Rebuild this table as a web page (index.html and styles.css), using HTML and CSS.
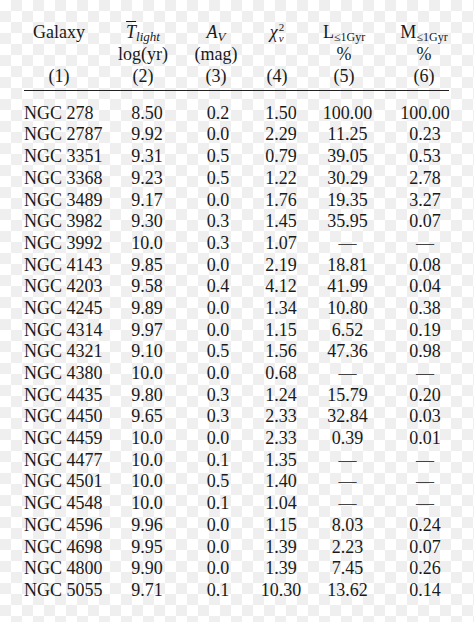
FILE: index.html
```html
<!DOCTYPE html>
<html>
<head>
<meta charset="utf-8">
<link rel="stylesheet" href="styles.css">
</head>
<body>
<div class="page">
  <div class="head">
    <div class="h">Galaxy</div>
    <div class="h"><span class="it ov">T</span><sub class="it">light</sub></div>
    <div class="h"><span class="it">A</span><sub class="it">V</sub></div>
    <div class="h"><span class="it">χ</span><span class="supsub"><span class="sp">2</span><span class="sb it">ν</span></span></div>
    <div class="h">L<sub class="gyr">≤1Gyr</sub></div>
    <div class="h">M<sub class="gyr">≤1Gyr</sub></div>

    <div class="h"></div>
    <div class="h">log(yr)</div>
    <div class="h">(mag)</div>
    <div class="h"></div>
    <div class="h">%</div>
    <div class="h">%</div>

    <div class="h">(1)</div>
    <div class="h">(2)</div>
    <div class="h">(3)</div>
    <div class="h">(4)</div>
    <div class="h">(5)</div>
    <div class="h">(6)</div>
  </div>
  <div class="rule"></div>
  <div class="body">
    <div class="n">NGC 278</div><div>8.50</div><div>0.2</div><div>1.50</div><div>100.00</div><div>100.00</div>
    <div class="n">NGC 2787</div><div>9.92</div><div>0.0</div><div>2.29</div><div>11.25</div><div>0.23</div>
    <div class="n">NGC 3351</div><div>9.31</div><div>0.5</div><div>0.79</div><div>39.05</div><div>0.53</div>
    <div class="n">NGC 3368</div><div>9.23</div><div>0.5</div><div>1.22</div><div>30.29</div><div>2.78</div>
    <div class="n">NGC 3489</div><div>9.17</div><div>0.0</div><div>1.76</div><div>19.35</div><div>3.27</div>
    <div class="n">NGC 3982</div><div>9.30</div><div>0.3</div><div>1.45</div><div>35.95</div><div>0.07</div>
    <div class="n">NGC 3992</div><div>10.0</div><div>0.3</div><div>1.07</div><div class="d">—</div><div class="d">—</div>
    <div class="n">NGC 4143</div><div>9.85</div><div>0.0</div><div>2.19</div><div>18.81</div><div>0.08</div>
    <div class="n">NGC 4203</div><div>9.58</div><div>0.4</div><div>4.12</div><div>41.99</div><div>0.04</div>
    <div class="n">NGC 4245</div><div>9.89</div><div>0.0</div><div>1.34</div><div>10.80</div><div>0.38</div>
    <div class="n">NGC 4314</div><div>9.97</div><div>0.0</div><div>1.15</div><div>6.52</div><div>0.19</div>
    <div class="n">NGC 4321</div><div>9.10</div><div>0.5</div><div>1.56</div><div>47.36</div><div>0.98</div>
    <div class="n">NGC 4380</div><div>10.0</div><div>0.0</div><div>0.68</div><div class="d">—</div><div class="d">—</div>
    <div class="n">NGC 4435</div><div>9.80</div><div>0.3</div><div>1.24</div><div>15.79</div><div>0.20</div>
    <div class="n">NGC 4450</div><div>9.65</div><div>0.3</div><div>2.33</div><div>32.84</div><div>0.03</div>
    <div class="n">NGC 4459</div><div>10.0</div><div>0.0</div><div>2.33</div><div>0.39</div><div>0.01</div>
    <div class="n">NGC 4477</div><div>10.0</div><div>0.1</div><div>1.35</div><div class="d">—</div><div class="d">—</div>
    <div class="n">NGC 4501</div><div>10.0</div><div>0.5</div><div>1.40</div><div class="d">—</div><div class="d">—</div>
    <div class="n">NGC 4548</div><div>10.0</div><div>0.1</div><div>1.04</div><div class="d">—</div><div class="d">—</div>
    <div class="n">NGC 4596</div><div>9.96</div><div>0.0</div><div>1.15</div><div>8.03</div><div>0.24</div>
    <div class="n">NGC 4698</div><div>9.95</div><div>0.0</div><div>1.39</div><div>2.23</div><div>0.07</div>
    <div class="n">NGC 4800</div><div>9.90</div><div>0.0</div><div>1.39</div><div>7.45</div><div>0.26</div>
    <div class="n">NGC 5055</div><div>9.71</div><div>0.1</div><div>10.30</div><div>13.62</div><div>0.14</div>
  </div>
</div>
</body>
</html>
```

FILE: styles.css
```css
html, body {
  margin: 0;
  padding: 0;
  overflow: hidden;
}
body {
  width: 474px;
  height: 622px;
  background-color: #fff;
  background-image: conic-gradient(#efefef 25%, #ffffff 0 50%, #efefef 0 75%, #ffffff 0);
  background-size: 22px 22px;
  font-family: "Liberation Serif", "DejaVu Serif", serif;
  font-size: 18px;
  color: #1a1a1a;
}
.page {
  width: 474px;
  height: 622px;
  padding-top: 21px;
  box-sizing: border-box;
}
.head {
  display: grid;
  grid-template-columns: 70px 98px 48px 74px 60px 100px;
  grid-auto-rows: 22px;
  margin-left: 24px;
  line-height: 22px;
}
.h {
  text-align: center;
  white-space: nowrap;
}
.it {
  font-style: italic;
}
.ov {
  text-decoration: overline;
  text-decoration-thickness: 1px;
}
sub {
  font-size: 13px;
  line-height: 0;
  vertical-align: -3px;
}
sub.gyr {
  font-size: 12px;
  vertical-align: -3px;
}
.supsub {
  display: inline-flex;
  flex-direction: column;
  vertical-align: 7px;
  line-height: 11px;
  font-size: 11px;
  text-align: left;
  margin-left: 1px;
}
.sp, .sb {
  display: block;
  height: 11px;
}
.rule {
  margin: 3px 0 0 24px;
  width: 425px;
  height: 1.4px;
  background: #222;
}
.body {
  display: grid;
  grid-template-columns: 83px 80px 62px 64px 69px 86px;
  grid-auto-rows: 21.7px;
  margin: 11.4px 0 0 24px;
  line-height: 21.7px;
  text-align: center;
  white-space: nowrap;
}
.body .n {
  text-align: left;
}
.body .d {
  color: #444;
}
```
